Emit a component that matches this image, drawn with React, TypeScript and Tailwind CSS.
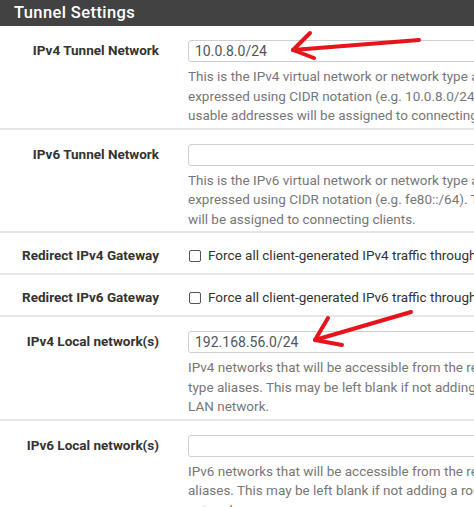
import React from 'react';

type Row = {
  label: string;
  value?: string;
  help?: string[];
  checkbox?: string;
};

const rows: Row[] = [
  {
    label: 'IPv4 Tunnel Network',
    value: '10.0.8.0/24',
    help: [
      'This is the IPv4 virtual network or network type alias with a single entry used for private communications between this server and client hosts',
      'expressed using CIDR notation (e.g. 10.0.8.0/24). The first usable address in the network will be assigned to the server virtual interface. The remaining',
      'usable addresses will be assigned to connecting clients.',
    ],
  },
  {
    label: 'IPv6 Tunnel Network',
    value: '',
    help: [
      'This is the IPv6 virtual network or network type alias with a single entry used for private communications between this server and client hosts',
      'expressed using CIDR notation (e.g. fe80::/64). The ::1 address in the network will be assigned to the server virtual interface. The remaining addresses',
      'will be assigned to connecting clients.',
    ],
  },
  { label: 'Redirect IPv4 Gateway', checkbox: 'Force all client-generated IPv4 traffic through the tunnel.' },
  { label: 'Redirect IPv6 Gateway', checkbox: 'Force all client-generated IPv6 traffic through the tunnel.' },
  {
    label: 'IPv4 Local network(s)',
    value: '192.168.56.0/24',
    help: [
      'IPv4 networks that will be accessible from the remote endpoint. Expressed as a comma-separated list of one or more CIDR ranges or host/network',
      'type aliases. This may be left blank if not adding a route to the local network through this tunnel on the remote machine. This is generally set to the',
      'LAN network.',
    ],
  },
  {
    label: 'IPv6 Local network(s)',
    value: '',
    help: [
      'IPv6 networks that will be accessible from the remote endpoint. Expressed as a comma-separated list of one or more IP/PREFIX or host/network type',
      'aliases. This may be left blank if not adding a route to the local network through this tunnel on the remote machine. This is generally set to the LAN',
      'network.',
    ],
  },
];

const App: React.FC = () => {
  return (
    <div
      className="relative w-[474px] h-[507px] overflow-hidden bg-white"
      style={{ fontFamily: 'Roboto, "Liberation Sans", sans-serif' }}
    >
      <div className="h-[26px] bg-[#424242] pl-[14px] flex items-center">
        <span className="text-white text-[16.5px] font-medium tracking-[0.4px]">Tunnel Settings</span>
      </div>

      {rows.map((row, i) =>
        row.checkbox ? (
          <div key={i} className="flex h-[42px] pt-[5px] items-center border-b-2 border-[#e6e6e6]">
            <div className="w-[159px] shrink-0 text-right text-[13.5px] font-bold text-[#333]">{row.label}</div>
            <div className="pl-[30px] flex items-center gap-[7px] whitespace-nowrap">
              <span className="w-[12px] h-[12px] border border-[#555] rounded-[2px] bg-white" />
              <span className="text-[13.5px] text-[#333]">{row.checkbox}</span>
            </div>
          </div>
        ) : (
          <div key={i} className="flex pt-[14px] pb-[2px] border-b-2 border-[#e6e6e6]">
            <div className="w-[159px] shrink-0 text-right text-[13.5px] leading-[20px] font-bold text-[#333]">
              {row.label}
            </div>
            <div className="pl-[29px]">
              <div className="w-[600px] h-[22px] border border-[#cfcfcf] rounded-[3px] px-[6px] flex items-center text-[14px] text-[#555]">
                {row.value}
              </div>
              <div className="mt-[5px] text-[13.5px] leading-[19.5px] text-[#777] whitespace-nowrap">
                {row.help?.map((line, j) => (
                  <div key={j}>{line}</div>
                ))}
              </div>
            </div>
          </div>
        )
      )}

      <svg className="absolute left-0 top-0 pointer-events-none" width="474" height="507">
        <g stroke="#e8141c" strokeWidth="4" strokeLinecap="round" strokeLinejoin="round" fill="none">
          <path d="M419 40 L293 50" />
          <path d="M310 33 L293 50 L314 58" />
          <path d="M411 312 L315 340" />
          <path d="M328 318 L315 340 L342 345" />
        </g>
      </svg>
    </div>
  );
};

export default App;
